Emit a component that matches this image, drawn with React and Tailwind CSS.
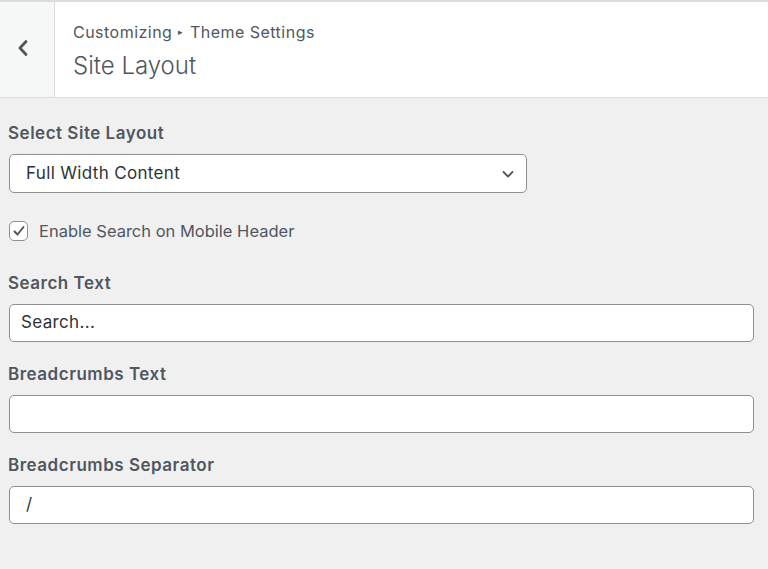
import React from "react";

const font = { fontFamily: "Inter, 'Noto Sans', sans-serif" };

function Field({ label, value }) {
  return (
    <div className="flex flex-col">
      <div className="text-[17px] font-semibold tracking-[0.03em] text-[#50575e] leading-[20px] h-[20px]">{label}</div>
      <div className="mt-[11px] h-[38px] w-[745px] ml-[1px] rounded-[5px] border border-[#8c8f94] bg-white flex items-center px-[11px] text-[17px] tracking-[0.02em] text-[#2c3338]">
        {value}
      </div>
    </div>
  );
}

export default function App() {
  return (
    <div className="w-[768px] h-[569px] bg-[#f0f0f1] overflow-hidden" style={font}>
      <div className="h-[2px] bg-[#dcdcde]" />
      <div className="flex h-[96px] border-b border-[#dcdcde]">
        <div className="w-[55px] bg-[#f6f7f7] border-r border-[#dcdcde] flex items-center justify-center">
          <svg width="12" height="18" viewBox="0 0 12 18" className="mr-[8px] mt-[-3px]">
            <path d="M9 2.5 L3 9 L9 15.5" fill="none" stroke="#50575e" strokeWidth="2.8" strokeLinecap="round" strokeLinejoin="round" />
          </svg>
        </div>
        <div className="flex-1 bg-white pl-[18px] pt-[19px]">
          <div className="text-[16px] tracking-[0.03em] text-[#50575e] leading-[22px] flex items-center">
            Customizing<span className="text-[9px] mx-[6px]">▸</span>Theme Settings
          </div>
          <div className="text-[24px] text-[#50575e] leading-[28px] mt-[9px] font-light">Site Layout</div>
        </div>
      </div>
      <div className="px-[8px] pt-[25px] flex flex-col">
        <div className="text-[17px] font-semibold tracking-[0.03em] text-[#50575e] leading-[20px]">Select Site Layout</div>
        <div className="mt-[11px] ml-[1px] h-[39px] w-[518px] rounded-[5px] border border-[#8c8f94] bg-white flex items-center justify-between pl-[16px] pr-[10px] text-[17px] tracking-[0.02em] text-[#2c3338]">
          <span>Full Width Content</span>
          <svg width="16" height="16" viewBox="0 0 16 16">
            <path d="M3.5 6 L8 10.5 L12.5 6" fill="none" stroke="#50575e" strokeWidth="1.8" strokeLinecap="round" strokeLinejoin="round" />
          </svg>
        </div>
        <div className="mt-[28px] ml-[1px] flex items-center h-[20px]">
          <div className="w-[19px] h-[20px] rounded-[5px] border border-[#8c8f94] bg-white flex items-center justify-center">
            <svg width="14" height="14" viewBox="0 0 14 14">
              <path d="M2.5 7.5 L5.5 10.5 L11.5 3" fill="none" stroke="#50575e" strokeWidth="2" strokeLinecap="round" strokeLinejoin="round" />
            </svg>
          </div>
          <span className="ml-[11px] text-[16.5px] text-[#50575e]">Enable Search on Mobile Header</span>
        </div>
        <div className="mt-[32px] flex flex-col gap-[22px]">
          <Field label="Search Text" value="Search..." />
          <Field label="Breadcrumbs Text" value="" />
          <Field label="Breadcrumbs Separator" value={<span className="ml-[5px]">/</span>} />
        </div>
      </div>
    </div>
  );
}
